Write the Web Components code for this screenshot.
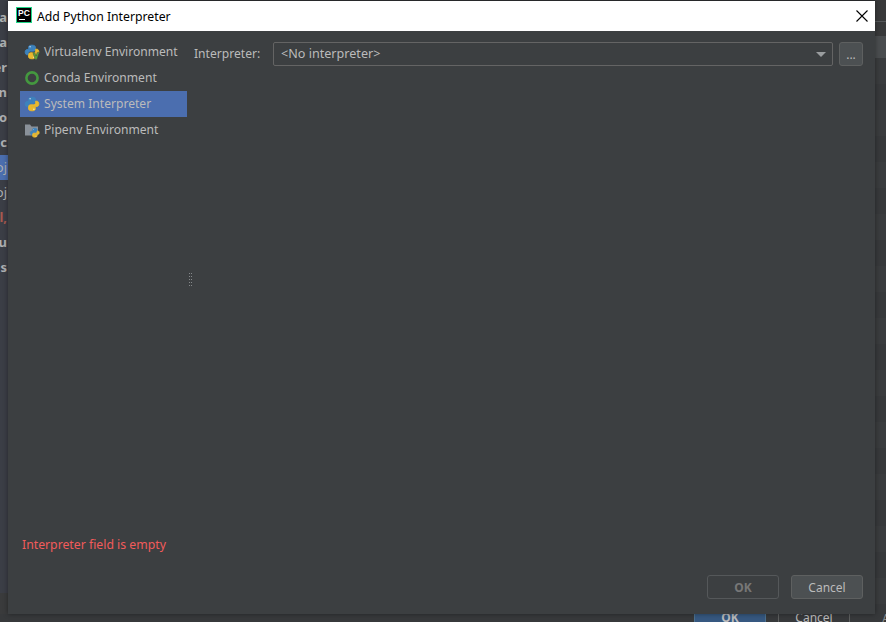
<!DOCTYPE html>
<html>
<head>
<meta charset="utf-8">
<title>Add Python Interpreter</title>
<style>
html, body { margin: 0; height: 100%; overflow: hidden; background: #2f3133; }
</style>
</head>
<body>
<settings-backdrop></settings-backdrop>
<interpreter-dialog>
  <env-item slot="envs" icon="virtualenv">Virtualenv Environment</env-item>
  <env-item slot="envs" icon="conda">Conda Environment</env-item>
  <env-item slot="envs" icon="python" selected>System Interpreter</env-item>
  <env-item slot="envs" icon="pipenv">Pipenv Environment</env-item>
  <interpreter-field slot="form" label="Interpreter:" value="&lt;No interpreter&gt;"></interpreter-field>
  <span slot="error">Interpreter field is empty</span>
  <dialog-button slot="buttons" disabled>OK</dialog-button>
  <dialog-button slot="buttons">Cancel</dialog-button>
</interpreter-dialog>

<script>
const FONT = '"Noto Sans", "Open Sans", sans-serif'

const snake = `
  <path fill="#3d83bd" stroke="#3d83bd" stroke-width=".9" d="M7.900 1.200C5.600 1.200 4.700 2 4.700 3v1.900h3.400v.7H3C1.900 5.600 1.200 6.600 1.200 8.100s.7 2.700 1.800 2.700h1.400V9.200c0-1.100 1-2 2-2h3.200c1 0 1.800-.8 1.800-1.800V3c0-1-1.200-1.800-3.500-1.800z"/>
  <circle cx="6.100" cy="2.800" r=".7" fill="#cfe0ef"/>
  <path fill="#e9b92e" stroke="#e9b92e" stroke-width=".9" d="M8.100 14.800c2.300 0 3.200-.8 3.200-1.800v-1.900H7.900v-.7H13c1.100 0 1.800-1 1.800-2.500s-.7-2.700-1.800-2.700h-1.400v1.600c0 1.100-1 2-2 2H6.400c-1 0-1.800.8-1.800 1.800V13c0 1 1.200 1.800 3.500 1.800z"/>
  <circle cx="9.900" cy="13.200" r=".7" fill="#fff3c4"/>`

const ICONS = {
  python: snake,
  virtualenv: snake + `<path fill="#5aa23c" stroke="#3c3f41" stroke-width=".4" d="M8.800 8.400h2l1.200 3.700 1.200-3.700h2l-2.300 7h-1.800z"/>`,
  conda: `<circle cx="8" cy="8" r="5.600" fill="none" stroke="#44983f" stroke-width="2.600"/>`,
  pipenv: `<path fill="#8a9199" d="M1 2.500h5l1.500 2H14v9H1z"/>
    <g transform="translate(5.500 5.500) scale(.66)">${snake}</g>`
}

class SettingsBackdrop extends HTMLElement {
  constructor(){
    super()
    this.shadowDOM = this.attachShadow({mode:"open"})
    const rows = [["a",""],["na",""],["er",""],["n",""],["o",""],["c",""],["oj","sel"],["oj","dim"],["l,","warn"],["u",""],["s",""]]
    this.shadowDOM.innerHTML = `
    <style>
      :host{ display:flex; flex-direction:column; width:886px; height:622px; color:#aeb0b2; font:bold 13px ${FONT}; }
      .main{ flex:1; display:flex; justify-content:space-between; min-height:0; }
      .side{ width:8px; background:linear-gradient(#3b3e46 0 593px, #3a3b3c 593px); overflow:hidden; padding-top:5px; box-sizing:border-box; }
      .row{ height:25px; line-height:25px; display:flex; justify-content:flex-end; white-space:nowrap; overflow:hidden; padding-right:1px; }
      .row.sel{ background:#4b6eaf; font-weight:normal; }
      .row.dim{ font-weight:normal; }
      .row.warn{ color:#a8594f; }
      .right{ width:11px; display:flex; flex-direction:column; }
      .top{ height:36px; flex:none; background:linear-gradient(#38393a 0 21px, #55585a 21px 22px, #38393a 22px); }
      .head{ height:22px; flex:none; background:#4a4d4f; }
      .rows{ flex:1; background:repeating-linear-gradient(#3a3c3e 0 26px, #37393b 26px 52px); }
      .bottom{ height:8px; background:#37393b; display:flex; padding-left:694px; gap:12px; overflow:hidden; box-sizing:border-box; }
      .b{ width:72px; flex:none; height:24px; text-align:center; line-height:8px; color:#bbb; font-size:12px; border-left:1px solid #5e6060; border-right:1px solid #5e6060; box-sizing:border-box; font-weight:normal; }
      .b.ok{ background:#365880; border-color:#4c708c; font-weight:bold; }
      .a{ width:8px; flex:none; margin-left:20px; line-height:10px; font-size:12px; font-weight:normal; color:#8b8d8f; }
    </style>
    <div class="main">
      <div class="side">${rows.map(r=>`<div class="row ${r[1]}">${r[0]}</div>`).join("")}</div>
      <div class="right"><div class="top"></div><div class="head"></div><div class="rows"></div></div>
    </div>
    <div class="bottom"><div class="b ok">OK</div><div class="b">Cancel</div><div class="a">A</div></div>`
  }
}

class EnvItem extends HTMLElement {
  constructor(){
    super()
    this.shadowDOM = this.attachShadow({mode:"open"})
  }
  connectedCallback(){
    const icon = ICONS[this.getAttribute("icon")]
    this.shadowDOM.innerHTML = `
    <style>
      :host{ display:flex; align-items:center; height:26px; padding-left:4px; gap:4px; color:#bbbbbb; white-space:nowrap; font-size:12.100px; }
      :host([selected]){ background:#4b6eaf; }
      svg{ width:16px; height:16px; flex:none; }
      .text{ margin-top:-2px; }
    </style>
    <svg viewBox="0 0 16 16">${icon}</svg><span class="text"><slot></slot></span>`
  }
}

class InterpreterField extends HTMLElement {
  constructor(){
    super()
    this.shadowDOM = this.attachShadow({mode:"open"})
  }
  connectedCallback(){
    this.shadowDOM.innerHTML = `
    <style>
      :host{ display:flex; align-items:center; height:24px; color:#bbbbbb; }
      .label{ width:79px; flex:none; margin-top:-2px; font-size:12.100px; }
      .combo{ flex:1; height:24px; box-sizing:border-box; border:1px solid #646464; border-radius:2px; display:flex; align-items:center; padding:0 6px 0 7px; justify-content:space-between; }
      .value{ font-size:12.600px; margin-top:-2px; }
      .arrow{ width:0; height:0; border:5px solid transparent; border-top:5px solid #9a9d9f; border-bottom:0; }
      .more{ width:24px; height:24px; margin-left:6px; flex:none; box-sizing:border-box; border:1px solid #5e6060; border-radius:3px; background:#4c5052; display:flex; justify-content:center; align-items:flex-end; line-height:20px; font-size:12px; }
    </style>
    <span class="label">${this.getAttribute("label")}</span>
    <div class="combo"><span class="value"></span><span class="arrow"></span></div>
    <div class="more">...</div>`
    this.shadowDOM.querySelector(".value").textContent = this.getAttribute("value")
  }
}

class DialogButton extends HTMLElement {
  constructor(){
    super()
    this.shadowDOM = this.attachShadow({mode:"open"})
    this.shadowDOM.innerHTML = `
    <style>
      :host{ display:flex; align-items:center; justify-content:center; width:72px; height:24px; box-sizing:border-box; border:1px solid #5e6060; border-radius:3px; background:#4c5052; color:#bbbbbb; }
      :host([disabled]){ background:transparent; border-color:#55585a; color:#777777; font-weight:bold; }
    </style>
    <slot></slot>`
  }
}

class InterpreterDialog extends HTMLElement {
  constructor(){
    super()
    this.shadowDOM = this.attachShadow({mode:"open"})
    let dots = ""
    for(let y = 0; y < 15; y += 3) dots += `<rect x="0" y="${y}" width="1" height="1"/><rect x="2" y="${y}" width="1" height="1"/>`
    this.shadowDOM.innerHTML = `
    <style>
      :host{ position:absolute; left:8px; top:1px; width:867px; height:613px; display:flex; flex-direction:column; background:#3c3f41; font:12px ${FONT}; box-shadow:0 0 5px rgba(0,0,0,.4); }
      .title{ height:30px; flex:none; background:#fff; color:#000; display:flex; align-items:center; padding-left:8px; gap:5px; font-size:12.250px; }
      .logo{ width:16px; height:16px; flex:none; margin-bottom:2px; }
      .caption{ flex:1; }
      .close{ width:14px; height:14px; margin-right:6px; }
      .body{ flex:1; display:flex; min-height:0; }
      .left{ width:167px; margin-left:12px; padding-top:8px; flex:none; }
      .grip{ width:7px; padding-top:242px; display:flex; justify-content:center; align-items:flex-start; }
      .grip svg{ width:3px; height:15px; fill:#85888a; }
      .right{ flex:1; padding:11px 12px 0 0; }
      .error{ flex:none; height:14px; line-height:14px; padding-left:14px; margin-bottom:23px; color:#f25b5b; font-size:12.250px; }
      .buttons{ flex:none; display:flex; justify-content:flex-end; gap:12px; padding:0 12px 15px 0; }
    </style>
    <div class="title">
      <svg class="logo" viewBox="0 0 16 16">
        <rect width="16" height="16" fill="#21d789"/>
        <rect x="1" y="1" width="14" height="14" fill="#000"/>
        <text x="2" y="9" font-family="Liberation Sans" font-weight="bold" font-size="8.500" fill="#fff">PC</text>
        <rect x="3" y="12" width="6" height="1" fill="#fff"/>
      </svg>
      <span class="caption">Add Python Interpreter</span>
      <svg class="close" viewBox="0 0 14 14"><path d="M1.500 1.500l11 11M12.500 1.500l-11 11" stroke="#000" stroke-width="1.100"/></svg>
    </div>
    <div class="body">
      <div class="left"><slot name="envs"></slot></div>
      <div class="grip"><svg viewBox="0 0 3 15">${dots}</svg></div>
      <div class="right"><slot name="form"></slot></div>
    </div>
    <div class="error"><slot name="error"></slot></div>
    <div class="buttons"><slot name="buttons"></slot></div>`
  }
}

customElements.define("settings-backdrop", SettingsBackdrop)
customElements.define("env-item", EnvItem)
customElements.define("interpreter-field", InterpreterField)
customElements.define("dialog-button", DialogButton)
customElements.define("interpreter-dialog", InterpreterDialog)
</script>
</body>
</html>
